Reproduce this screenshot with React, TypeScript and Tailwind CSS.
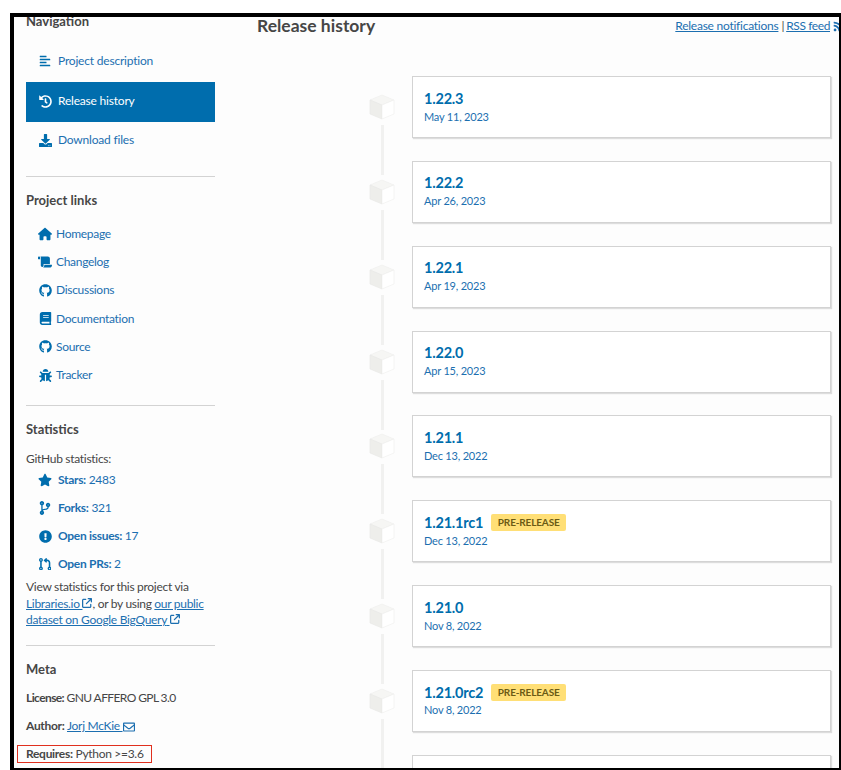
import React from "react";
import {
  FaAlignLeft,
  FaBook,
  FaBug,
  FaCodeBranch,
  FaDownload,
  FaExclamationCircle,
  FaGithub,
  FaHistory,
  FaRegEnvelope,
  FaRss,
  FaScroll,
  FaStar,
} from "react-icons/fa";
import { FaArrowUpRightFromSquare, FaCodePullRequest, FaHouse } from "react-icons/fa6";

const releases = [
  { version: "1.22.3", date: "May 11, 2023" },
  { version: "1.22.2", date: "Apr 26, 2023" },
  { version: "1.22.1", date: "Apr 19, 2023" },
  { version: "1.22.0", date: "Apr 15, 2023" },
  { version: "1.21.1", date: "Dec 13, 2022" },
  { version: "1.21.1rc1", date: "Dec 13, 2022", pre: true },
  { version: "1.21.0", date: "Nov 8, 2022" },
  { version: "1.21.0rc2", date: "Nov 8, 2022", pre: true },
  { version: "", date: "" },
];

const projectLinks = [
  { label: "Homepage", icon: FaHouse, size: "h-[14px] w-[14px]" },
  { label: "Changelog", icon: FaScroll, size: "h-[14px] w-[14px]" },
  { label: "Discussions", icon: FaGithub, size: "h-[13px] w-[13px]" },
  { label: "Documentation", icon: FaBook, size: "h-[13px] w-[13px]" },
  { label: "Source", icon: FaGithub, size: "h-[13px] w-[13px]" },
  { label: "Tracker", icon: FaBug, size: "h-[13px] w-[13px]" },
];

const stats = [
  { label: "Stars:", value: "2483", icon: FaStar, size: "h-[14px] w-[14px]" },
  { label: "Forks:", value: "321", icon: FaCodeBranch, size: "h-[14px] w-[14px]" },
  { label: "Open issues:", value: "17", icon: FaExclamationCircle, size: "h-[13px] w-[13px]" },
  { label: "Open PRs:", value: "2", icon: FaCodePullRequest, size: "h-[12.5px] w-[12.5px]" },
];

const Cube = () => (
  <svg width="26" height="26" viewBox="0 0 26 26" className="shrink-0">
    <polygon points="13,1 25,6 13,11 1,6" fill="#f6f6f4" stroke="#efefed" strokeWidth="0.6" />
    <polygon points="1,6 13,11 13,25 1,20" fill="#eeeeeb" stroke="#e8e8e5" strokeWidth="0.6" />
    <polygon points="25,6 13,11 13,25 25,20" fill="#ffffff" stroke="#efefed" strokeWidth="0.6" />
  </svg>
);

const Sidebar = () => (
  <aside className="w-[189px] shrink-0 text-[12px] tracking-[-0.3px] text-[#464646]">
    <h3 className="-mt-[1px] h-[10px] text-[13px] leading-[10px] font-bold tracking-normal">Navigation</h3>
    <nav className="mt-[15px] flex flex-col tracking-[-0.2px] text-[#1c6fb0]">
      <a className="flex h-10 items-center gap-[7px] pl-[13px]">
        <FaAlignLeft className="h-[12px] w-[12px] text-[#006dad]" />
        Project description
      </a>
      <a className="mt-[1px] flex h-10 items-center gap-[6px] bg-[#006dad] pb-[2px] pl-[13px] text-white">
        <FaHistory className="h-[13px] w-[13px]" />
        Release history
      </a>
      <a className="-mt-[1px] flex h-10 items-center gap-[6px] pb-[2px] pl-[13px]">
        <FaDownload className="h-[13px] w-[13px] text-[#006dad]" />
        Download files
      </a>
    </nav>
    <div className="mt-[15px] border-t border-[#d3d3d3]" />
    <h3 className="mt-[15px] text-[13px] leading-[17px] font-bold tracking-normal">Project links</h3>
    <ul className="mt-[11px] flex flex-col text-[#1c6fb0]">
      {projectLinks.map(({ label, icon: Icon, size }) => (
        <li key={label} className="flex h-[28.2px] items-center gap-[4px] pl-[12px]">
          <span className="flex w-[14px] justify-center">
            <Icon className={`${size} text-[#006dad]`} />
          </span>
          {label}
        </li>
      ))}
    </ul>
    <div className="mt-[16px] border-t border-[#d3d3d3]" />
    <h3 className="mt-[15px] text-[13px] leading-[17px] font-bold tracking-normal">Statistics</h3>
    <p className="mt-[12px] leading-[17px]">GitHub statistics:</p>
    <ul className="-mt-[1px] flex flex-col text-[#1c6fb0]">
      {stats.map(({ label, value, icon: Icon, size }) => (
        <li key={label} className="flex h-[28px] items-center gap-[6px] pl-[12px]">
          <span className="flex w-[14px] justify-center">
            <Icon className={`${size} text-[#006dad]`} />
          </span>
          <span className="whitespace-nowrap">
            <b className="font-bold">{label}</b> {value}
          </span>
        </li>
      ))}
    </ul>
    <p className="mt-[1px] leading-[16.5px] whitespace-nowrap">
      View statistics for this project via
      <br />
      <a className="text-[#1c6fb0] underline">
        Libraries.io <FaArrowUpRightFromSquare className="inline h-[10px] w-[10px] align-baseline" />
      </a>
      , or by using <a className="text-[#1c6fb0] underline">our public</a>
      <br />
      <a className="text-[#1c6fb0] underline">
        dataset on Google BigQuery{" "}
        <FaArrowUpRightFromSquare className="inline h-[10px] w-[10px] align-baseline" />
      </a>
    </p>
    <div className="mt-[16px] border-t border-[#d3d3d3]" />
    <h3 className="mt-[15px] text-[13px] leading-[17px] font-bold tracking-normal">Meta</h3>
    <p className="mt-[11px] leading-[17px] tracking-[-0.6px] whitespace-nowrap">
      <b className="font-bold">License:</b> GNU AFFERO GPL 3.0
    </p>
    <p className="mt-[11px] leading-[17px] whitespace-nowrap">
      <b className="font-bold">Author:</b>{" "}
      <a className="text-[#1c6fb0] underline">
        Jorj McKie <FaRegEnvelope className="inline h-[12px] w-[12px]" />
      </a>
    </p>
    <p className="mt-[11px] -ml-[9px] flex h-[18px] w-[135px] items-center border border-[#e0301e] pl-[8px] whitespace-nowrap">
      <span>
        <b className="font-bold">Requires:</b> Python &gt;=3.6
      </span>
    </p>
  </aside>
);

const ReleaseRow = ({ version, date, pre }: { version: string; date: string; pre?: boolean }) => (
  <div className="flex h-[84.85px] shrink-0">
    <div className="flex w-[60px] flex-col items-center pt-[18px]">
      <Cube />
      <div className="mt-[5px] h-[50px] w-[3px] shrink-0 bg-[#f1f1f0]" />
    </div>
    <div className="h-[62px] w-[419px] shrink-0 border border-[#d3d3d3] bg-white px-[11px] pt-[12px] shadow-[1px_1px_1px_#dddddd]">
      <div className="flex h-[19px] items-center gap-[8px]">
        <span className="text-[14.5px] font-bold tracking-[-0.2px] text-[#006dad]">{version}</span>
        {pre && (
          <span className="rounded-[2px] bg-[#ffdf76] px-[6.5px] text-[10px] leading-[17px] font-bold tracking-[-0.15px] text-[#6b5a14]">
            PRE-RELEASE
          </span>
        )}
      </div>
      <div className="-mt-[0.5px] text-[11px] leading-[17px] tracking-[-0.2px] text-[#1c6fb0]">{date}</div>
    </div>
  </div>
);

export default function App() {
  return (
    <div className="h-[770px] w-[841px] overflow-hidden bg-white pt-[13px] pl-[10px] font-['Lato','Liberation_Sans',sans-serif]">
      <div className="flex h-[757px] w-[831px] overflow-hidden border-t-4 border-r-2 border-b-2 border-l-4 border-black bg-[#fdfdfd] pl-[12px]">
        <Sidebar />
        <main className="ml-[42px] flex-1">
          <div className="flex h-[59px] items-start justify-between">
            <h2 className="text-[17.5px] leading-[18px] font-bold text-[#464646]">Release history</h2>
            <div className="mr-[-5px] flex items-center gap-[3px] pt-[3px] text-[12px] leading-[12px] tracking-[-0.25px] text-[#1c6fb0]">
              <a className="underline">Release notifications</a>
              <span className="text-[#464646]">|</span>
              <a className="-ml-[1px] flex items-center gap-[3px] tracking-[-0.4px] underline">
                RSS feed <FaRss className="h-[11px] w-[11px]" />
              </a>
            </div>
          </div>
          <div className="ml-[95px] flex flex-col">
            {releases.map((r, i) => (
              <ReleaseRow key={i} version={r.version} date={r.date} pre={r.pre} />
            ))}
          </div>
        </main>
      </div>
    </div>
  );
}
